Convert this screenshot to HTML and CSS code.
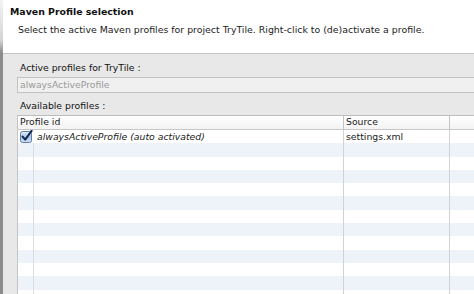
FILE: index.html
```html
<!DOCTYPE html>
<html>
<head>
<meta charset="utf-8">
<link rel="stylesheet" href="styles.css">
</head>
<body>
<div class="page">
  <div class="edge"></div>
  <div class="content">
    <div class="header">
      <div class="title">Maven Profile selection</div>
      <div class="desc">Select the active Maven profiles for project TryTile. Right-click to (de)activate a profile.</div>
    </div>
    <div class="panel">
      <div class="label">Active profiles for TryTile :</div>
      <div class="field">alwaysActiveProfile</div>
      <div class="label label-avail">Available profiles :</div>
      <div class="table">
        <div class="row head">
          <div class="c1">Profile id</div>
          <div class="c2">Source</div>
          <div class="c3"></div>
        </div>
        <div class="row">
          <div class="c1 first">
            <svg class="check" width="13" height="13" viewBox="0 0 13 13">
              <defs>
                <linearGradient id="cb" x1="0" y1="0" x2="0" y2="1">
                  <stop offset="0" stop-color="#e4eefa"/>
                  <stop offset="0.5" stop-color="#a9c8ea"/>
                  <stop offset="1" stop-color="#cfe2f7"/>
                </linearGradient>
              </defs>
              <rect x="0.5" y="1.5" width="11" height="11" rx="2" fill="url(#cb)" stroke="#5d7ea8"/>
              <path d="M2.6 6.6 L5.2 9.6 L11.6 0.8" fill="none" stroke="#15254d" stroke-width="2" stroke-linecap="round" stroke-linejoin="round"/>
            </svg>
            <span class="pid">alwaysActiveProfile (auto activated)</span>
          </div>
          <div class="c2">settings.xml</div>
          <div class="c3"></div>
        </div>
        <div class="row empty"><div class="c1"></div><div class="c2"></div><div class="c3"></div></div>
        <div class="row empty"><div class="c1"></div><div class="c2"></div><div class="c3"></div></div>
        <div class="row empty"><div class="c1"></div><div class="c2"></div><div class="c3"></div></div>
        <div class="row empty"><div class="c1"></div><div class="c2"></div><div class="c3"></div></div>
        <div class="row empty"><div class="c1"></div><div class="c2"></div><div class="c3"></div></div>
        <div class="row empty"><div class="c1"></div><div class="c2"></div><div class="c3"></div></div>
        <div class="row empty"><div class="c1"></div><div class="c2"></div><div class="c3"></div></div>
        <div class="row empty"><div class="c1"></div><div class="c2"></div><div class="c3"></div></div>
        <div class="row empty"><div class="c1"></div><div class="c2"></div><div class="c3"></div></div>
        <div class="row empty"><div class="c1"></div><div class="c2"></div><div class="c3"></div></div>
        <div class="row empty"><div class="c1"></div><div class="c2"></div><div class="c3"></div></div>
        <div class="row empty"><div class="c1"></div><div class="c2"></div><div class="c3"></div></div>
      </div>
    </div>
  </div>
</div>
</body>
</html>
```
FILE: styles.css
```css
html, body {
  margin: 0;
  padding: 0;
}
body {
  width: 474px;
  height: 294px;
  overflow: hidden;
  font-family: "DejaVu Sans", "Liberation Sans", sans-serif;
  font-size: 9.3px;
  color: #1a1a1a;
  background: #e8e8e8;
}
.page {
  display: flex;
  width: 474px;
  height: 294px;
  overflow: hidden;
}
.edge {
  width: 3px;
  flex: none;
  background: linear-gradient(#f4f4f4 0, #d4d4d4 40px, #8c8c8c 53px, #8c8c8c 100%);
}
.content {
  flex: 1;
  display: flex;
  flex-direction: column;
  min-width: 0;
}
.header {
  height: 54px;
  box-sizing: border-box;
  background: #ffffff;
  border-bottom: 1px solid #c6c6c6;
  padding: 6px 0 0 7px;
}
.title {
  font-weight: bold;
  font-size: 9.4px;
  line-height: 12px;
  color: #111;
  white-space: nowrap;
}
.desc {
  margin: 5.5px 0 0 8px;
  font-size: 9.4px;
  line-height: 12px;
  color: #222;
  white-space: nowrap;
}
.panel {
  flex: 1;
  background: #e8e8e8;
  padding: 8px 0 0 14px;
  display: flex;
  flex-direction: column;
  min-height: 0;
}
.label {
  line-height: 12px;
  padding-left: 3px;
  color: #111;
  white-space: nowrap;
}
.field {
  margin-top: 3px;
  height: 16px;
  box-sizing: border-box;
  border: 1px solid #c2c2c2;
  border-right: none;
  background: #f0f0f0;
  color: #9a9a9a;
  line-height: 14px;
  padding-left: 2px;
}
.label-avail {
  margin-top: 7px;
}
.table {
  margin-top: 3px;
  flex: 1;
  background: #ffffff;
  border-top: 1px solid #bcbcbc;
  border-left: 1px solid #c4c4c4;
}
.row {
  display: grid;
  grid-template-columns: 326px 106px 1fr;
  height: 13.3px;
  line-height: 13.3px;
  white-space: nowrap;
}
.row:nth-child(odd) {
  background: #eef3fa;
}
.row .c1, .row .c2 {
  border-right: 1px solid #d2d2d2;
  padding-left: 2px;
  overflow: hidden;
}
.row.head {
  height: 14px;
  line-height: 12px;
  background: linear-gradient(#ffffff, #f3f3f3);
  border-bottom: 1px solid #c8c8c8;
  box-sizing: border-box;
}
.row.head .c1, .row.head .c2 {
  border-right-color: #c4c4c4;
}
.first {
  display: flex;
  align-items: center;
  gap: 4px;
}
.check {
  flex: none;
  margin-top: -1px;
}
.pid {
  font-style: italic;
}
.row.empty .c1 {
  background: linear-gradient(to right, transparent 15px, #dcdcdc 15px, #dcdcdc 16px, transparent 16px);
}
```
